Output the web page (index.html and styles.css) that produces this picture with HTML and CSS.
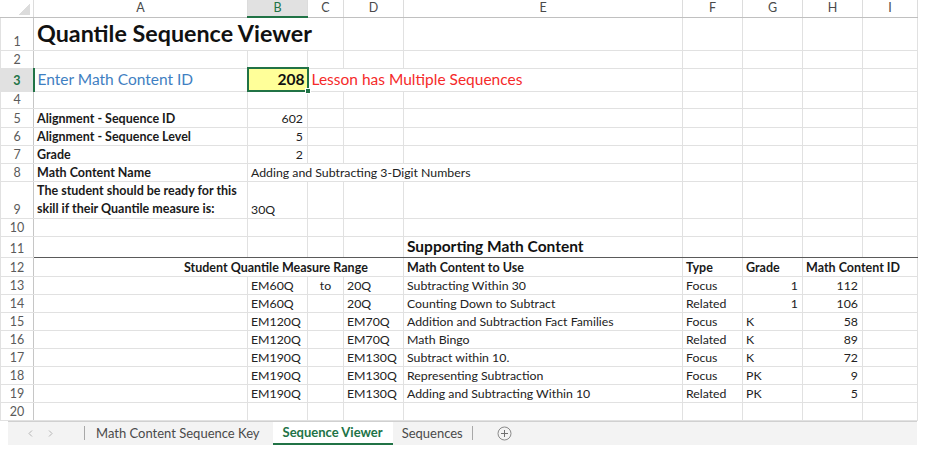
FILE: index.html
```html
<!DOCTYPE html>
<html>
<head>
<meta charset="utf-8">
<title>Quantile Sequence Viewer</title>
<link rel="stylesheet" href="styles.css">
</head>
<body>
<div class="app">
<table class="sheet">
<colgroup>
<col class="c-hdr"><col class="c-a"><col class="c-b"><col class="c-c"><col class="c-d"><col class="c-e"><col class="c-f"><col class="c-g"><col class="c-h"><col class="c-i">
</colgroup>
<thead>
<tr class="r-colhdr"><th class="corner"></th><th>A</th><th class="sel">B</th><th>C</th><th>D</th><th>E</th><th>F</th><th>G</th><th>H</th><th>I</th></tr>
</thead>
<tbody>
<tr class="r1"><th>1</th><td colspan="3" class="title">Quantile Sequence Viewer</td><td></td><td></td><td></td><td></td><td></td><td></td></tr>
<tr class="r18"><th>2</th><td></td><td></td><td></td><td></td><td></td><td></td><td></td><td></td><td></td></tr>
<tr class="r3"><th class="sel-row">3</th><td class="blue">Enter Math Content ID</td><td class="input"><span class="val">208</span><span class="handle"></span></td><td colspan="3" class="red">Lesson has Multiple Sequences</td><td></td><td></td><td></td><td></td></tr>
<tr class="r17"><th>4</th><td></td><td></td><td></td><td></td><td></td><td></td><td></td><td></td><td></td></tr>
<tr class="r19"><th>5</th><td class="b">Alignment - Sequence ID</td><td class="num">602</td><td></td><td></td><td></td><td></td><td></td><td></td><td></td></tr>
<tr class="r18"><th>6</th><td class="b">Alignment - Sequence Level</td><td class="num">5</td><td></td><td></td><td></td><td></td><td></td><td></td><td></td></tr>
<tr class="r18"><th>7</th><td class="b">Grade</td><td class="num">2</td><td></td><td></td><td></td><td></td><td></td><td></td><td></td></tr>
<tr class="r18"><th>8</th><td class="b">Math Content Name</td><td colspan="4">Adding and Subtracting 3-Digit Numbers</td><td></td><td></td><td></td><td></td></tr>
<tr class="r9"><th>9</th><td class="b wrap">The student should be ready for this<br>skill if their Quantile measure is:</td><td>30Q</td><td></td><td></td><td></td><td></td><td></td><td></td><td></td></tr>
<tr class="r18"><th>10</th><td></td><td></td><td></td><td></td><td></td><td></td><td></td><td></td><td></td></tr>
<tr class="r11"><th>11</th><td class="rule"></td><td class="rule"></td><td class="rule"></td><td class="rule"></td><td class="rule sub">Supporting Math Content</td><td class="rule"></td><td class="rule"></td><td class="rule"></td><td class="rule"></td></tr>
<tr class="r19 hdr"><th>12</th><td colspan="4" class="b range">Student Quantile Measure Range</td><td class="b">Math Content to Use</td><td class="b">Type</td><td class="b">Grade</td><td colspan="2" class="b">Math Content ID</td></tr>
<tr class="r18"><th>13</th><td></td><td>EM60Q</td><td class="ctr">to</td><td>20Q</td><td>Subtracting Within 30</td><td>Focus</td><td class="num">1</td><td class="num">112</td><td></td></tr>
<tr class="r18"><th>14</th><td></td><td>EM60Q</td><td></td><td>20Q</td><td>Counting Down to Subtract</td><td>Related</td><td class="num">1</td><td class="num">106</td><td></td></tr>
<tr class="r18"><th>15</th><td></td><td>EM120Q</td><td></td><td>EM70Q</td><td>Addition and Subtraction Fact Families</td><td>Focus</td><td>K</td><td class="num">58</td><td></td></tr>
<tr class="r18"><th>16</th><td></td><td>EM120Q</td><td></td><td>EM70Q</td><td>Math Bingo</td><td>Related</td><td>K</td><td class="num">89</td><td></td></tr>
<tr class="r18"><th>17</th><td></td><td>EM190Q</td><td></td><td>EM130Q</td><td>Subtract within 10.</td><td>Focus</td><td>K</td><td class="num">72</td><td></td></tr>
<tr class="r18"><th>18</th><td></td><td>EM190Q</td><td></td><td>EM130Q</td><td>Representing Subtraction</td><td>Focus</td><td>PK</td><td class="num">9</td><td></td></tr>
<tr class="r18"><th>19</th><td></td><td>EM190Q</td><td></td><td>EM130Q</td><td>Adding and Subtracting Within 10</td><td>Related</td><td>PK</td><td class="num">5</td><td></td></tr>
<tr class="r18"><th>20</th><td></td><td></td><td></td><td></td><td></td><td></td><td></td><td></td><td></td></tr>
</tbody>
</table>
<div class="tabs">
  <div class="nav">
    <svg class="arrow" width="5" height="7" viewBox="0 0 5 7"><path d="M4 0.5 L1 3.5 L4 6.5" fill="none" stroke="#b4b4b4" stroke-width="1"/></svg>
    <svg class="arrow" width="5" height="7" viewBox="0 0 5 7"><path d="M1 0.5 L4 3.5 L1 6.5" fill="none" stroke="#b4b4b4" stroke-width="1"/></svg>
  </div>
  <span class="sep"></span>
  <div class="tab">Math Content Sequence Key</div>
  <div class="tab active">Sequence Viewer</div>
  <div class="tab tab-last">Sequences</div>
  <span class="sep"></span>
  <div class="add">
    <svg width="15" height="15" viewBox="0 0 15 15"><circle cx="7.5" cy="7.5" r="6.5" fill="none" stroke="#8a8a8a" stroke-width="1"/><path d="M7.5 4 V11 M4 7.5 H11" stroke="#6f6f6f" stroke-width="1"/></svg>
  </div>
</div>
</div>
</body>
</html>
```

FILE: styles.css
```css
* { box-sizing: border-box; }
html, body { margin: 0; padding: 0; background: #fff; }
body {
  font-family: Lato, "Noto Sans", sans-serif;
  font-size: 12.3px;
  color: #222;
}
.app { width: 917px; }

.sheet {
  border-collapse: collapse;
  table-layout: fixed;
  width: 917px;
}
.c-hdr { width: 33px; }
.c-a { width: 214px; }
.c-b { width: 60px; }
.c-c { width: 36px; }
.c-d { width: 60px; }
.c-e { width: 279px; }
.c-f { width: 60px; }
.c-g { width: 60px; }
.c-h { width: 60px; }
.c-i { width: 55px; }

.sheet td {
  border: 1px solid #e1e1e1;
  padding: 0 3px 1px 3px;
  white-space: nowrap;
  overflow: hidden;
  vertical-align: bottom;
  text-align: left;
  line-height: 15px;
}
.sheet th {
  border: 1px solid #e1e1e1;
  border-right: 1px solid #c6c6c6;
  padding: 0 0 1px 0;
  font-weight: normal;
  color: #5a5a5a;
  text-align: center;
  vertical-align: bottom;
  font-size: 12.5px;
  line-height: 15px;
}

.r-colhdr { height: 17px; }
.sheet .r-colhdr th {
  border-top: none;
  border-right: 1px solid #dcdcdc;
  border-bottom: 1px solid #c0c0c0;
  color: #4a4a4a;
  line-height: 14px;
  vertical-align: middle;
  padding: 0;
}
.sheet .r-colhdr th.sel {
  background: #e1e1e1;
  color: #217346;
  border-bottom: 2px solid #217346;
}
.sheet th.corner {
  border-left: none;
  background-image: linear-gradient(135deg, transparent 50%, #dcdcdc 50%);
  background-repeat: no-repeat;
  background-size: 11px 11px;
  background-position: right 3px bottom 2px;
}
.sheet th.sel-row {
  background: #e1e1e1;
  color: #217346;
  font-weight: bold;
  border-right: 2px solid #217346;
  padding-bottom: 3px;
}

.r1 { height: 33px; }
.r3 { height: 23px; }
.r17 { height: 17px; }
.r18 { height: 18px; }
.r19 { height: 19px; }
.r9 { height: 36px; }
.r11 { height: 21px; }

.sheet td.title {
  font-size: 23.3px;
  font-weight: bold;
  color: #111;
  line-height: 26px;
  padding-bottom: 4px;
  overflow: visible;
}
.sheet td.blue {
  color: #3f7fc2;
  font-size: 15.5px;
  line-height: 19px;
  padding-bottom: 2px;
}
.sheet td.red {
  color: #f52a2a;
  font-size: 15.5px;
  line-height: 19px;
  padding-bottom: 2px;
}
.sheet td.input {
  position: relative;
  overflow: visible;
  background: #ffff99;
  border: 2px solid #217346;
  text-align: right;
  font-weight: bold;
  font-size: 15.5px;
  line-height: 19px;
  padding: 0 2px 1px 2px;
  color: #111;
}
.handle {
  position: absolute;
  right: -4px;
  bottom: -4px;
  width: 6px;
  height: 6px;
  background: #217346;
  border: 1px solid #fff;
}
.b { font-weight: bold; color: #1a1a1a; font-size: 12.5px; }
.sheet td.num { text-align: right; padding-right: 4px; }
.sheet td.ctr { text-align: center; }
.sheet td.wrap { line-height: 18px; padding-bottom: 0; }
.sheet td.rule { border-bottom: 1px solid #5a5a5a; }
.sheet td.sub {
  font-weight: bold;
  font-size: 15.5px;
  line-height: 19px;
  color: #111;
  padding-bottom: 1px;
  overflow: visible;
}
.sheet td.range { padding-left: 150px; }

.tabs {
  margin-left: 8px;
  width: 909px;
  height: 24px;
  background: #f3f3f3;
  border-top: 1px solid #d0d0d0;
  display: flex;
  align-items: stretch;
  font-size: 13px;
  color: #4a4a4a;
}
.nav {
  width: 76px;
  display: flex;
  align-items: center;
  padding-left: 20px;
  gap: 15px;
}
.sep {
  width: 1px;
  background: #a8a8a8;
  margin: 4px 0 5px;
}
.tab {
  display: flex;
  align-items: center;
  padding: 0 12px 1px 11px;
}
.tab.active {
  background: #fff;
  color: #217346;
  font-weight: bold;
  padding: 0 10px 0 10px;
  border-bottom: 2px solid #217346;
  margin-left: 1px;
}
.tab-last { padding: 0 9px 1px 9px; }
.add {
  display: flex;
  align-items: center;
  margin-left: 24px;
}
```
